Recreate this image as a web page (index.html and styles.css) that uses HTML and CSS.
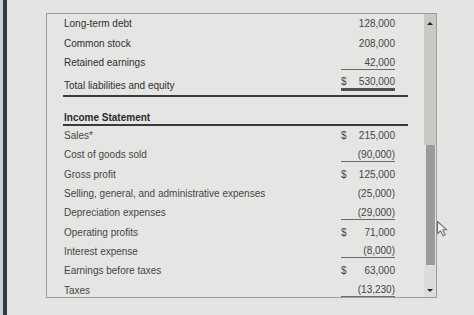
FILE: index.html
```html
<!DOCTYPE html>
<html>
<head>
<meta charset="utf-8">
<link rel="stylesheet" href="styles.css">
</head>
<body>
<div class="screen">
  <div class="edge"></div>
  <div class="panel">
    <div class="content">
      <div class="sheet">
        <div class="row"><span class="label">Long-term debt</span><span class="amt"><span class="cur"></span><span>128,000</span></span></div>
        <div class="row"><span class="label">Common stock</span><span class="amt"><span class="cur"></span><span>208,000</span></span></div>
        <div class="row"><span class="label">Retained earnings</span><span class="amt ul"><span class="cur"></span><span>42,000</span></span></div>
        <div class="row total"><span class="label">Total liabilities and equity</span><span class="amt dul"><span class="cur">$</span><span>530,000</span></span></div>
        <div class="heading">Income Statement</div>
        <div class="row inc"><span class="label">Sales*</span><span class="amt"><span class="cur">$</span><span>215,000</span></span></div>
        <div class="row inc"><span class="label">Cost of goods sold</span><span class="amt ul"><span class="cur"></span><span>(90,000)</span></span></div>
        <div class="row inc"><span class="label">Gross profit</span><span class="amt"><span class="cur">$</span><span>125,000</span></span></div>
        <div class="row inc"><span class="label">Selling, general, and administrative expenses</span><span class="amt"><span class="cur"></span><span>(25,000)</span></span></div>
        <div class="row inc"><span class="label">Depreciation expenses</span><span class="amt ul"><span class="cur"></span><span>(29,000)</span></span></div>
        <div class="row inc"><span class="label">Operating profits</span><span class="amt"><span class="cur">$</span><span>71,000</span></span></div>
        <div class="row inc"><span class="label">Interest expense</span><span class="amt ul"><span class="cur"></span><span>(8,000)</span></span></div>
        <div class="row inc"><span class="label">Earnings before taxes</span><span class="amt"><span class="cur">$</span><span>63,000</span></span></div>
        <div class="row inc"><span class="label">Taxes</span><span class="amt ul"><span class="cur"></span><span>(13,230)</span></span></div>
      </div>
    </div>
    <div class="scrollbar">
      <div class="sb-top"><span class="tri up"></span></div>
      <div class="thumb"></div>
      <div class="sb-bottom"><span class="tri down"></span></div>
    </div>
  </div>
  <svg class="cursor" width="13" height="17" viewBox="0 0 13 17">
    <path d="M1.5 1.5 L1.5 13.5 L4.5 10.8 L7 15.8 L9.2 14.8 L6.8 9.8 L10.8 9.8 Z" fill="#f2f2f2" stroke="#6f6f6f" stroke-width="1.1" stroke-linejoin="round"/>
  </svg>
</div>
</body>
</html>
```
FILE: styles.css
```css
html, body {
  margin: 0;
  padding: 0;
}
body {
  background: #e3e4e2;
  font-family: "Liberation Sans", Arial, sans-serif;
  font-size: 10px;
}
.screen {
  position: relative;
  width: 474px;
  height: 315px;
  display: flex;
  align-items: flex-start;
  overflow: hidden;
  background: #e4e5e3;
}
.edge {
  width: 4px;
  height: 315px;
  margin-left: 3px;
  background: #2f3d45;
  box-shadow: -3px 0 0 #c9cfd2;
}
.panel {
  margin-left: 39px;
  margin-top: 13px;
  width: 391px;
  height: 285px;
  box-sizing: border-box;
  border: 1px solid #9c9d9b;
  display: flex;
  background: #e5e6e4;
}
.content {
  flex: 1;
  overflow: hidden;
  padding-left: 16px;
}
.sheet {
  width: 345px;
}
.row {
  display: flex;
  align-items: center;
  height: 19.5px;
  color: #2e2e2e;
}
.row.inc {
  height: 19.3px;
  color: #454545;
}
.label {
  flex: 1;
  padding-left: 1px;
  white-space: nowrap;
}
.amt {
  width: 54px;
  height: 13px;
  line-height: 13px;
  margin-right: 13px;
  display: flex;
  justify-content: space-between;
  color: #444;
}
.amt.ul {
  border-bottom: 1px solid #6a6a6a;
}
.amt.dul {
  border-bottom: 3px solid #505050;
}
.row.total {
  height: 20.5px;
  align-items: flex-start;
  padding-top: 2px;
  border-bottom: 2px solid #3a3a3a;
}
.row.total .label {
  padding-top: 5px;
}
.heading {
  padding-top: 14px;
  padding-left: 1px;
  height: 13px;
  line-height: 13px;
  font-weight: bold;
  color: #2a2a2a;
  border-bottom: 2px solid #3a3a3a;
}
.scrollbar {
  width: 12px;
  display: flex;
  flex-direction: column;
}
.sb-top {
  height: 131px;
  background: #c8cbc3;
  display: flex;
  justify-content: center;
  padding-top: 8px;
  box-sizing: border-box;
}
.thumb {
  height: 120px;
  margin: 0 1px 0 2px;
  background: #9a9b99;
}
.sb-bottom {
  flex: 1;
  background: #dcdddb;
  display: flex;
  justify-content: center;
  align-items: flex-end;
  padding-bottom: 5px;
}
.tri {
  width: 0;
  height: 0;
  border-left: 3px solid transparent;
  border-right: 3px solid transparent;
}
.tri.up {
  border-bottom: 3px solid #222;
}
.tri.down {
  border-top: 3px solid #222;
}
.cursor {
  position: absolute;
  left: 436px;
  top: 220px;
}
```
